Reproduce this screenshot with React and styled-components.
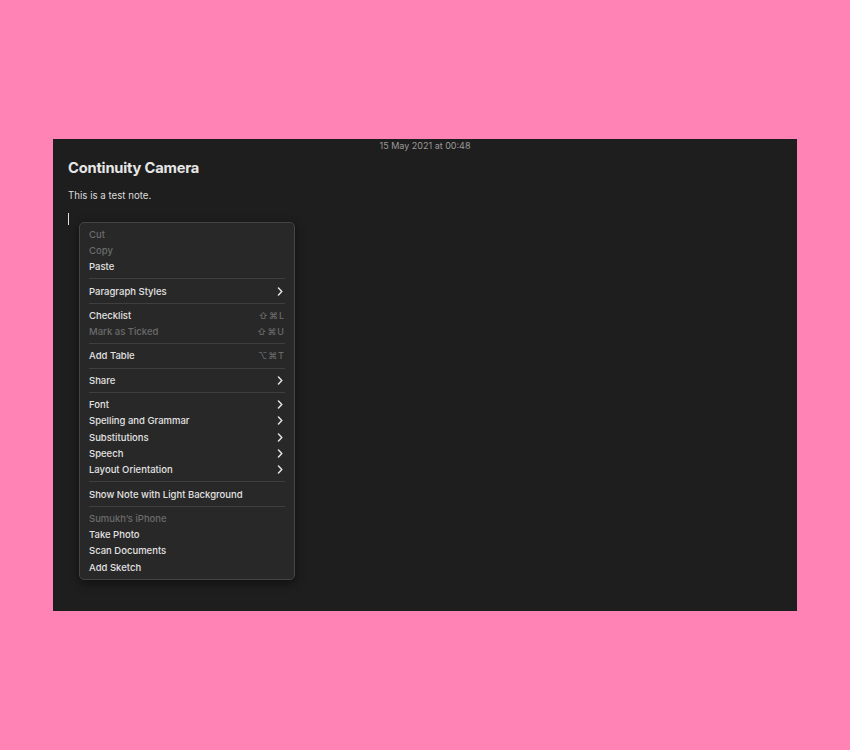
import React from "react";
import styled, { createGlobalStyle } from "styled-components";

const Global = createGlobalStyle`
  html, body {
    margin: 0;
    padding: 0;
    background: #ff84b5;
  }
  body {
    font-family: Inter, "Liberation Sans", sans-serif;
  }
`;

const Page = styled.div`
  width: 850px;
  height: 750px;
  padding-top: 139px;
  padding-left: 53px;
  box-sizing: border-box;
`;

const Window = styled.div`
  width: 744px;
  height: 472px;
  background: #1e1e1e;
  box-sizing: border-box;
  padding: 0 15px;
  display: flex;
  flex-direction: column;
`;

const DateLine = styled.div`
  text-align: center;
  color: #9a9a9a;
  font-size: 9px;
  height: 14px;
  line-height: 14px;
`;

const Title = styled.h1`
  margin: 6px 0 0;
  font-size: 14.7px;
  font-weight: 700;
  color: #e6e6e6;
  letter-spacing: -0.2px;
  line-height: 18px;
`;

const Body = styled.p`
  margin: 12px 0 0;
  font-size: 9.7px;
  color: #dcdcdc;
  line-height: 13px;
`;

const Cursor = styled.div`
  width: 1px;
  height: 12px;
  background: #e0e0e0;
  margin-top: 11px;
`;

const Menu = styled.div`
  margin: -3px 0 0 11px;
  width: 216px;
  box-sizing: border-box;
  background: #282828;
  border: 1px solid #454545;
  border-radius: 5px;
  box-shadow: 0 3px 10px rgba(0, 0, 0, 0.5);
  padding: 3px 9px 4px;
  display: flex;
  flex-direction: column;
`;

const Item = styled.div`
  display: flex;
  align-items: center;
  justify-content: space-between;
  height: 16.3px;
  padding: 0 1px 0 0;
  font-size: 9.5px;
  font-weight: 500;
  color: ${(p) => (p.$off ? "#6b6b6b" : "#e2e2e2")};
`;

const Shortcut = styled.span`
  font-size: 9px;
  color: #6b6b6b;
  letter-spacing: 1px;
  margin-right: -1px;
`;

const Sep = styled.div`
  height: 1px;
  background: #3f3f3f;
  margin: 3.5px 0;
`;

function Chevron() {
  return (
    <svg width="6" height="9" viewBox="0 0 6 9" style={{ marginRight: 1 }}>
      <path d="M1.5 1 L4.8 4.5 L1.5 8" fill="none" stroke="#e2e2e2" strokeWidth="1.5" strokeLinecap="round" strokeLinejoin="round" />
    </svg>
  );
}

const groups = [
  [
    { label: "Cut", off: true },
    { label: "Copy", off: true },
    { label: "Paste" },
  ],
  [{ label: "Paragraph Styles", sub: true }],
  [
    { label: "Checklist", key: "⇧⌘L" },
    { label: "Mark as Ticked", off: true, key: "⇧⌘U" },
  ],
  [{ label: "Add Table", key: "⌥⌘T" }],
  [{ label: "Share", sub: true }],
  [
    { label: "Font", sub: true },
    { label: "Spelling and Grammar", sub: true },
    { label: "Substitutions", sub: true },
    { label: "Speech", sub: true },
    { label: "Layout Orientation", sub: true },
  ],
  [{ label: "Show Note with Light Background" }],
  [
    { label: "Sumukh’s iPhone", off: true },
    { label: "Take Photo" },
    { label: "Scan Documents" },
    { label: "Add Sketch" },
  ],
];

export default function App() {
  return (
    <Page>
      <Global />
      <Window>
        <DateLine>15 May 2021 at 00:48</DateLine>
        <Title>Continuity Camera</Title>
        <Body>This is a test note.</Body>
        <Cursor />
        <Menu>
          {groups.map((g, gi) => (
            <React.Fragment key={gi}>
              {gi > 0 && <Sep />}
              {g.map((it) => (
                <Item key={it.label} $off={it.off}>
                  <span>{it.label}</span>
                  {it.sub && <Chevron />}
                  {it.key && <Shortcut>{it.key}</Shortcut>}
                </Item>
              ))}
            </React.Fragment>
          ))}
        </Menu>
      </Window>
    </Page>
  );
}
